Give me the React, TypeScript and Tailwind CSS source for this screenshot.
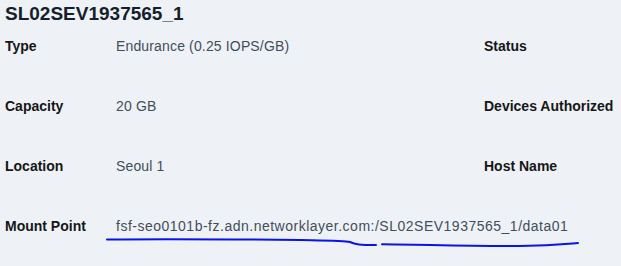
import React from "react";

const rows: [string, string, string, string][] = [
  ["Type", "Endurance (0.25 IOPS/GB)", "Status", "tracking-[0.15px]"],
  ["Capacity", "20 GB", "Devices Authorized", "tracking-[0.15px]"],
  ["Location", "Seoul 1", "Host Name", "tracking-[0.15px]"],
  ["Mount Point", "fsf-seo0101b-fz.adn.networklayer.com:/SL02SEV1937565_1/data01", "", "tracking-[0.5px]"],
];

export default function App() {
  return (
    <div
      className="relative w-[621px] h-[266px] overflow-hidden bg-[#eef2f7] text-[#161616]"
      style={{ fontFamily: "'Liberation Sans', Arial, sans-serif" }}
    >
      <div className="pl-[5px] pt-[2px] h-[26px] text-[19px] leading-[24px] font-bold text-[#161e2a]">
        SL02SEV1937565_1
      </div>
      <div className="grid grid-cols-[111px_368px_1fr] pl-[5px]">
        {rows.map(([a, b, c, t]) => (
          <React.Fragment key={a}>
            <div className="h-[60px] pt-[10px] leading-[20px] text-[14px] font-bold text-[#161616]">{a}</div>
            <div className={`h-[60px] pt-[10px] leading-[20px] text-[14px] whitespace-nowrap text-[#434d59] ${t}`}>{b}</div>
            <div className="h-[60px] pt-[10px] leading-[20px] text-[14px] font-bold text-[#161616] whitespace-nowrap">{c}</div>
          </React.Fragment>
        ))}
      </div>
      <svg className="absolute left-0 top-0 pointer-events-none" width="621" height="266">
        <path
          d="M107 239.5 C 160 239, 250 239.5, 300 240 C 330 240.5, 345 240.5, 350 242 C 355 244.5, 360 245, 376 245"
          stroke="#0a14e6"
          strokeWidth="2"
          fill="none"
          strokeLinecap="round"
        />
        <path
          d="M382 244.3 C 420 244.5, 470 246.5, 520 246 C 550 245.5, 565 244, 578 243"
          stroke="#0a14e6"
          strokeWidth="2"
          fill="none"
          strokeLinecap="round"
        />
      </svg>
    </div>
  );
}
